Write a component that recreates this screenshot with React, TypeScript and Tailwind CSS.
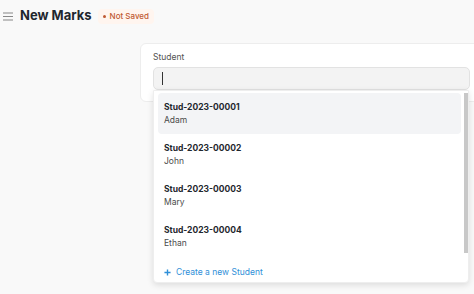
import React from "react";

const students = [
  { id: "Stud-2023-00001", name: "Adam" },
  { id: "Stud-2023-00002", name: "John" },
  { id: "Stud-2023-00003", name: "Mary" },
  { id: "Stud-2023-00004", name: "Ethan" },
];

export default function App() {
  return (
    <div
      className="w-[474px] h-[294px] overflow-hidden bg-[#f9f9f9] relative"
      style={{ fontFamily: "Inter, 'Noto Sans', sans-serif" }}
    >
      <div className="flex items-center h-[32px] pl-[3px]">
        <svg width="10" height="9" viewBox="0 0 10 9" className="mr-[7px] mt-[1px]">
          <path d="M0 1h10M0 4.5h10M0 8h10" stroke="#888" strokeWidth="1.1" />
        </svg>
        <span className="text-[13px] font-bold text-[#1f272e]">New Marks</span>
        <span className="ml-[6px] flex items-center gap-[4px] bg-[#fff5ef] text-[#bf5a32] text-[8px] font-medium rounded-[4px] px-[5px] h-[15px]">
          <span className="w-[3px] h-[3px] rounded-full bg-[#bf5a32]" />
          Not Saved
        </span>
      </div>

      <div className="ml-[140px] mt-[11px] w-[360px] h-[59px] bg-white rounded-[6px] border border-[#ededed] pt-[7px] pl-[12px]">
        <div className="text-[8.5px] text-[#525252] leading-[12px]">Student</div>
        <div className="mt-[4px] w-[317px] h-[23px] bg-[#f3f3f3] border border-[#e2e2e2] rounded-[5px] flex items-center pl-[8px]">
          <div className="w-px h-[13px] bg-[#333]" />
        </div>
      </div>

      <div className="absolute left-[153px] top-[90px] w-[316px] h-[193px] bg-white rounded-b-[4px] shadow-[0_2px_6px_rgba(0,0,0,0.12)] border border-[#eeeeee]">
        <div className="absolute right-[0px] top-[2px] w-[4px] h-[160px] bg-[#c8c8c8]" />
        <div className="pt-[2px] pl-[4px] pr-[7px]">
          {students.map((s, i) => (
            <div
              key={s.id}
              className={`h-[41px] rounded-[4px] pl-[6px] pt-[8px] ${i === 0 ? "bg-[#f3f4f6]" : ""}`}
            >
              <div className="text-[8.5px] font-bold text-[#1f272e] leading-[12px]">{s.id}</div>
              <div className="text-[8.5px] text-[#4a4a4a] leading-[12px] mt-[1px]">{s.name}</div>
            </div>
          ))}
          <div className="flex items-center pl-[6px] mt-[9px] text-[8.5px] text-[#2f8fd8]">
            <svg width="7" height="7" viewBox="0 0 8 8" className="mr-[5px]">
              <path d="M4 0.5v7M0.5 4h7" stroke="#2f8fd8" strokeWidth="1.6" />
            </svg>
            Create a new Student
          </div>
        </div>
      </div>
    </div>
  );
}
